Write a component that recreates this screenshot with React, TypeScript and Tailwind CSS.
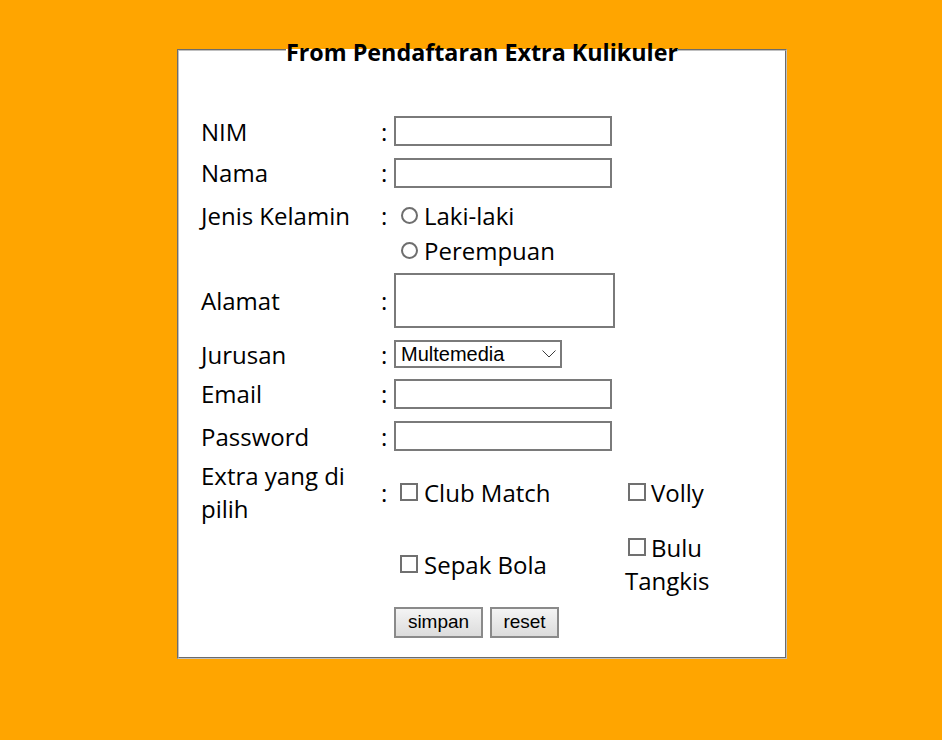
import React from 'react';

const inputCls =
  "w-[218px] h-[30px] border-2 border-[#7a7a7a] bg-white px-[3px] font-['Liberation_Sans',Arial,sans-serif] text-[18px] text-black outline-none";

const Check = ({ label, first }: { label: string; first?: boolean }) => (
  <label className="block">
    <input
      type="checkbox"
      className={
        first
          ? 'appearance-none w-[18px] h-[18px] border-2 border-[#707070] bg-white align-[1px] ml-[6px] mr-[6px]'
          : 'appearance-none w-[18px] h-[18px] border-2 border-[#707070] bg-white align-[1px] ml-[3px] mr-[5px]'
      }
    />
    {label}
  </label>
);

const Radio = ({ label }: { label: string }) => (
  <label className="block">
    <input
      type="radio"
      name="jk"
      className="appearance-none w-[17px] h-[17px] rounded-full border-2 border-[#6e6e6e] bg-white align-[1px] ml-[7px] mr-[6px]"
    />
    {label}
  </label>
);

export default function App() {
  return (
    <div className="min-h-screen bg-[#ffa500] pt-[31px]">
      <form>
        <fieldset className="ml-[177px] w-[610px] border-2 [border-style:groove] border-[#c0c0c0] bg-white px-[22px] pt-[41px] pb-[12px] font-['Open_Sans',sans-serif] text-[24px] leading-[33px] text-black">
          <legend className="mx-auto px-0 pt-[4px] font-bold text-[23.3px] leading-[34px]">From Pendaftaran Extra Kulikuler</legend>

          <div className="grid grid-cols-[180px_13px_1fr] grid-rows-[42px_41px_44px_26px_75px_32px_47px_38px_74px_70px_46px] items-center">
            {/* NIM */}
            <div>NIM</div>
            <div>:</div>
            <div className="flex">
              <input type="text" className={inputCls} />
            </div>

            {/* Nama */}
            <div>Nama</div>
            <div>:</div>
            <div className="flex">
              <input type="text" className={inputCls} />
            </div>

            {/* Jenis Kelamin */}
            <div>Jenis Kelamin</div>
            <div>:</div>
            <Radio label="Laki-laki" />
            <div />
            <div />
            <Radio label="Perempuan" />

            {/* Alamat */}
            <div>Alamat</div>
            <div>:</div>
            <div className="flex">
              <textarea className="w-[221px] h-[55px] border-2 border-[#7a7a7a] bg-white resize-none outline-none font-['Liberation_Sans',Arial,sans-serif] text-[18px]" />
            </div>

            {/* Jurusan */}
            <div>Jurusan</div>
            <div>:</div>
            <div className="flex">
              <div className="relative flex">
                <select className="appearance-none w-[168px] h-[28px] border-2 border-[#7a7a7a] bg-white pl-[5px] font-['Liberation_Sans',Arial,sans-serif] text-[20px] leading-[24px] text-black outline-none">
                  <option>Multemedia</option>
                  <option>Teknik Informatika</option>
                  <option>Sistem Informasi</option>
                </select>
                <svg
                  className="pointer-events-none absolute right-[6px] top-1/2 -translate-y-1/2"
                  width="14"
                  height="8"
                  viewBox="0 0 14 8"
                  fill="none"
                >
                  <path d="M0.5 0.5 L7 7 L13.5 0.5" stroke="#3c3c3c" strokeWidth="1" />
                </svg>
              </div>
            </div>

            {/* Email */}
            <div>Email</div>
            <div>:</div>
            <div className="flex">
              <input type="email" className={inputCls} />
            </div>

            {/* Password */}
            <div>Password</div>
            <div>:</div>
            <div className="flex">
              <input type="password" className={inputCls} />
            </div>

            {/* Extra */}
            <div>Extra yang di pilih</div>
            <div>:</div>
            <div className="grid grid-cols-[231px_88px] items-center">
              <Check label="Club Match" first />
              <Check label="Volly" />
            </div>
            <div />
            <div />
            <div className="grid grid-cols-[231px_88px] items-center">
              <Check label="Sepak Bola" first />
              <Check label="Bulu Tangkis" />
            </div>

            {/* Buttons */}
            <div />
            <div />
            <div className="flex gap-[7px]">
              <button
                type="submit"
                className="w-[89px] h-[31px] border-2 border-[#8a8a8a] bg-linear-to-b from-[#f4f4f4] to-[#dcdcdc] font-['Liberation_Sans',Arial,sans-serif] text-[19px] leading-[24px] text-black"
              >
                simpan
              </button>
              <button
                type="reset"
                className="w-[69px] h-[31px] border-2 border-[#8a8a8a] bg-linear-to-b from-[#f4f4f4] to-[#dcdcdc] font-['Liberation_Sans',Arial,sans-serif] text-[19px] leading-[24px] text-black"
              >
                reset
              </button>
            </div>
          </div>
        </fieldset>
      </form>
    </div>
  );
}
